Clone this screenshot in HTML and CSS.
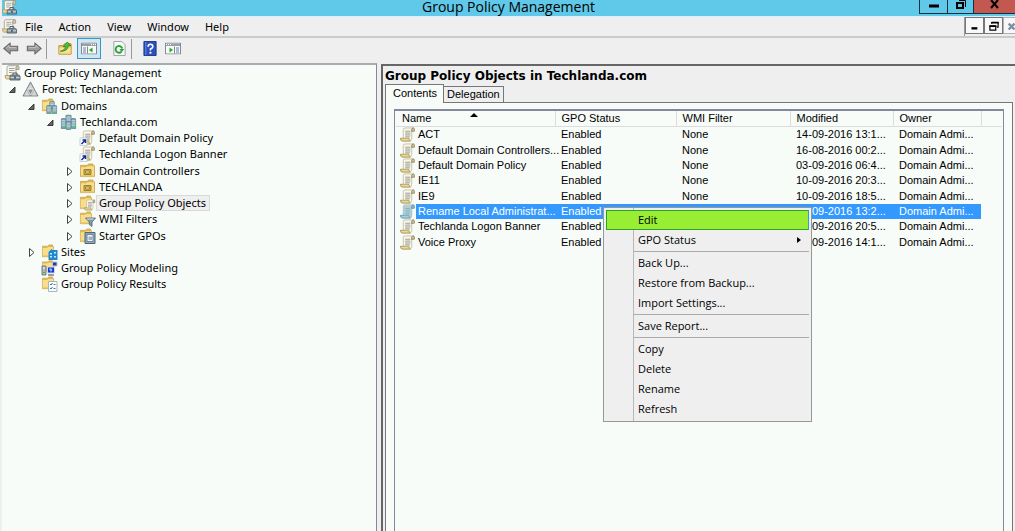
FILE: index.html
```html
<!DOCTYPE html>
<html lang="en">
<head>
<meta charset="utf-8">
<title>Group Policy Management</title>
<link rel="stylesheet" href="styles.css">
</head>
<body>
<svg class="sprite" aria-hidden="true">
  <symbol id="scroll" viewBox="0 0 16 16">
    <path d="M3.500 2.500Q3.500 1 5.500 1H14Q12.500 2 12.500 4V12Q12.500 15 10 15H3Q.5 15 .5 12.500H3.500Z" fill="#faf7e4" stroke="#bdb38c" stroke-width=".8"/>
    <path d="M12.500 5V2.500Q13 .8 14.500 .8Q15.800 2 15.300 4.500H12.500" fill="#d3c58f" stroke="#85795a" stroke-width=".8"/>
    <path d="M.5 12H9.500Q9.500 14.500 11 15H3Q.5 15 .5 12Z" fill="#ead893" stroke="#a39055" stroke-width=".8"/>
    <path d="M5.500 4.500H11M5.500 6.500H11M5.500 8.500H11M5.500 10.500H10.500" stroke="#858c99" stroke-width=".9"/>
  </symbol>
  <symbol id="console" viewBox="0 0 16 16">
    <path d="M2.500 2.500Q2.500 .7 4.500 .7H13Q11.500 2 11.500 4V12H2.500Z" fill="#fbf8ea" stroke="#9a968a" stroke-width=".8"/>
    <path d="M.5 10.500H7V14H2Q.5 14 .5 10.500Z" fill="#ead999" stroke="#9c8a55" stroke-width=".7"/>
    <path d="M11.500 4.500V2Q12.500 .5 14 .7Q15 2 14.500 4.500Z" fill="#d6cba0" stroke="#8d8a7c" stroke-width=".7"/>
    <path d="M4.500 3.500H10M4.500 5.500H10M4.500 7.500H8" stroke="#9297a0" stroke-width=".9"/>
    <path d="M8.500 10V8H12.500V10" fill="none" stroke="#4c5a63"/>
    <path d="M5.500 11L7 10H14L15.500 11V15H5.500Z" fill="#8496a0" stroke="#44525b" stroke-width=".8"/>
    <path d="M6 12.500H15" stroke="#c7d5d8"/><path d="M9.800 11.500H11.300V13.500H9.800Z" fill="#38464e"/>
  </symbol>
  <symbol id="forest" viewBox="0 0 16 16">
    <path d="M8 1L15.500 15H.5Z" fill="#a4a8aa" stroke="#6e7274" stroke-width=".8"/>
    <path d="M8 2.500L11 8H5ZM4.300 9L7 14.500H1.600ZM11.700 9L14.400 14.500H9Z" fill="#d4d7d8"/>
    <path d="M5 8.200H11L8 14Z" fill="#898e90" stroke="#f6f8f7" stroke-width=".7"/>
  </symbol>
  <symbol id="folder" viewBox="0 0 16 16" preserveAspectRatio="none">
    <path d="M1 2.500H8L9 1H13.500V3H15V14.500H1Z" fill="#e3b94e" stroke="#c29b3f" stroke-width=".7"/>
    <path d="M1.500 4.500H6.500L8 3.500H14.500V14H1.500Z" fill="#f7dd8e"/>
    <path d="M2 13.500H14" stroke="#e9c260"/>
  </symbol>
  <symbol id="server" viewBox="0 0 8 10" preserveAspectRatio="none">
    <path d="M1 1L2 .5H6L7 1V9.500H1Z" fill="#7fa3b3" stroke="#4a7084" stroke-width=".7"/>
    <path d="M1.500 2.500H6.500M1.500 4.500H6.500M1.500 6.500H6.500" stroke="#d9ebf1" stroke-width=".9"/>
    <path d="M4 7.500H6V9H4Z" fill="#3cdd32"/>
  </symbol>
  <symbol id="domains" viewBox="0 0 16 16">
    <use href="#folder" width="13" height="14"/>
    <use href="#server" x="7.500" y="3" width="6" height="8"/>
    <use href="#server" x="4.500" y="7" width="6" height="9"/>
    <use href="#server" x="10" y="7" width="6" height="9"/>
  </symbol>
  <symbol id="domain" viewBox="0 0 16 16">
    <use href="#server" x="4.500" y=".5" width="7" height="10"/>
    <use href="#server" x="0" y="4" width="6" height="11"/>
    <use href="#server" x="10" y="4" width="6" height="11"/>
    <use href="#server" x="5" y="7" width="6" height="9"/>
  </symbol>
  <symbol id="link" viewBox="0 0 16 16">
    <use href="#scroll" width="16" height="15"/>
    <path d="M.5 8H7.500V15.500H.5Z" fill="#fff" stroke="#b3bad3" stroke-width=".7"/>
    <path d="M2 14L5.500 10.500M3 10H6V13" fill="none" stroke="#172e91" stroke-width="1.500"/>
  </symbol>
  <symbol id="ou" viewBox="0 0 16 16">
    <use href="#folder" width="16" height="15"/>
    <path d="M4.500 6.500H11.500V11.500H4.500Z" fill="#d3b44b" stroke="#97802f"/>
    <path d="M6 8H10V10H6Z" fill="#f6e5a6" stroke="#866d1b" stroke-width=".7"/>
  </symbol>
  <symbol id="objects" viewBox="0 0 16 16">
    <use href="#folder" width="13" height="15"/>
    <use href="#scroll" x="4.500" y="4" width="11.500" height="12"/>
  </symbol>
  <symbol id="filters" viewBox="0 0 16 16">
    <use href="#folder" width="13" height="14"/>
    <path d="M6 7H16L12.500 11V15.500L9.800 13.500V11Z" fill="#7f9aaa" stroke="#486577" stroke-width=".8"/>
    <path d="M7.500 8H14" stroke="#d9edf2"/>
  </symbol>
  <symbol id="starter" viewBox="0 0 16 16">
    <use href="#folder" width="13" height="15"/>
    <path d="M5.500 4.500H15.500V15.500H5.500Z" fill="#93a9b7" stroke="#4e6676"/>
    <path d="M7.500 6.500H13.500V13.500H7.500Z" fill="#f5f7f8" stroke="#6a86a1"/>
    <path d="M9 8.500H12.500V12H9Z" fill="#9fb0c2"/>
  </symbol>
  <symbol id="sites" viewBox="0 0 16 16">
    <use href="#folder" width="13" height="14"/>
    <path d="M7 8L10 5L11 6H16V16H7Z" fill="#2088cf"/>
    <path d="M8.500 9H10.500V10.500H8.500ZM12.500 8H14.500V9.500H12.500ZM8.500 12H10.500V13.500H8.500ZM12.500 12H14.500V13.500H12.500Z" fill="#bdf0ff"/>
  </symbol>
  <symbol id="modeling" viewBox="0 0 16 16">
    <use href="#folder" width="13" height="12"/>
    <path d="M.5 6H4.500V15H.5Z" fill="#b3b8be" stroke="#5b646e" stroke-width=".8"/>
    <path d="M1.500 8H3.500" stroke="#fff"/><path d="M1.500 12.500H3.500" stroke="#39c431"/>
    <path d="M6 7H13V13H6Z" fill="#2234c9" stroke="#d5d9e2"/>
    <path d="M7.500 9L9.500 8L11 10L9.500 12Z" fill="#79c5ff"/>
    <path d="M6.500 15H12.500" stroke="#777f8b" stroke-width="1.500"/>
    <path d="M11 2H15.500V6H11Z" fill="#2c3a9e" stroke="#c2c6d2"/>
  </symbol>
  <symbol id="results" viewBox="0 0 16 16">
    <use href="#folder" width="13" height="14"/>
    <path d="M7 5.500H15.500V15.500H7Z" fill="#f8fcff" stroke="#93a6b5" stroke-width=".8"/>
    <path d="M8.500 8L9.500 9L11 7M8.500 12L9.500 13L11 11" fill="none" stroke="#1d77c9"/>
    <path d="M12 8.500H14M12 12.500H14" stroke="#60768a"/>
  </symbol>
  <symbol id="closed" viewBox="0 0 10 10"><path d="M2.500 1.500L7 5.500L2.500 9.500Z" fill="#fff" stroke="#444"/></symbol>
  <symbol id="open" viewBox="0 0 10 10"><path d="M7 3V8.500H1.500Z" fill="#666" stroke="#222" stroke-width=".8"/></symbol>
  <symbol id="arrow" viewBox="0 0 18 14"><path d="M1 7L8 1V4.500H16.500V9.500H8V13Z" fill="#9c9c9c" stroke="#666" stroke-width="1.200"/><path d="M3.500 6.500L7 3.500V6H15" fill="none" stroke="#c9c9c9"/></symbol>
  <symbol id="pane" viewBox="0 0 16 12">
    <path d="M.5.500H15.500V11.500H.5Z" fill="#f7f9fa" stroke="#83898e"/>
    <path d="M1 1H15V3.500H1Z" fill="#9aa1a6"/><path d="M10 2H11M12 2H13M14 2H15" stroke="#fff"/>
    <path d="M6.500 4V11" stroke="#83898e"/><path d="M2 5.500H5M2 7.500H5M2 9.500H5" stroke="#5f82b1"/>
    <path d="M11.500 5V10L8 7.500Z" fill="#22ab22"/>
  </symbol>
</svg>

<div class="window">
  <header class="titlebar">
    <svg class="app-icon"><use href="#console"/></svg>
    <h1>Group Policy Management</h1>
    <div class="caption-buttons">
      <button class="caption" aria-label="Minimize"><svg viewBox="0 0 12 14"><path d="M1 6H11" stroke="#000" stroke-width="3"/></svg></button>
      <button class="caption restore" aria-label="Restore"><svg viewBox="0 0 12 14"><path d="M2 3H8V8H2Z" fill="none" stroke="#000" stroke-width="2"/><path d="M4 .5H10.500V7" fill="none" stroke="#000"/></svg></button>
      <button class="caption close" aria-label="Close"><svg viewBox="0 0 12 14"><path d="M2 0L9 8M9 0L2 8" stroke="#000" stroke-width="2"/></svg></button>
    </div>
  </header>

  <div class="menubar">
    <svg class="app-icon"><use href="#console"/></svg>
    <nav>
      <button>File</button><button>Action</button><button>View</button><button>Window</button><button>Help</button>
    </nav>
    <div class="child-buttons">
      <button aria-label="Minimize child"><svg viewBox="0 0 12 12"><path d="M3 8H8" stroke="#000" stroke-width="2"/></svg></button>
      <button aria-label="Restore child"><svg viewBox="0 0 12 12"><path d="M2.500 6H7.500V9.500H2.500Z" fill="none" stroke="#000"/><path d="M4 4V3H9.500V7H8.500" fill="none" stroke="#000"/><path d="M2 6H8M4 3H10" stroke="#000" stroke-width="1.500"/></svg></button>
      <button class="child-close" aria-label="Close child"><svg viewBox="0 0 12 12"><path d="M4 4L9 9M9 4L4 9" stroke="#7b90a3" stroke-width="2"/></svg></button>
    </div>
  </div>

  <div class="toolbar">
    <button aria-label="Back"><svg viewBox="0 0 18 14"><use href="#arrow"/></svg></button>
    <button aria-label="Forward"><svg class="flip" viewBox="0 0 18 14"><use href="#arrow"/></svg></button>
    <span class="divider"></span>
    <button aria-label="Up one level"><svg viewBox="0 0 16 16"><path d="M1.500 5H6L7.500 3H14.500V14H1.500Z" fill="#efc85d" stroke="#b68a29"/><path d="M2 7H14V13.500H2Z" fill="#f8df92"/><path d="M3 11Q8 10 8.500 6H6L10.500 1L14 5H11.500Q11 11 3 11Z" fill="#4fc13c" stroke="#247e1c" stroke-width=".8"/></svg></button>
    <button class="pressed" aria-label="Show console tree"><svg viewBox="0 0 16 12"><use href="#pane"/></svg></button>
    <button class="refresh" aria-label="Refresh"><svg viewBox="0 0 16 16"><path d="M2.500.500H11L14.500 4V15.500H2.500Z" fill="#fafafa" stroke="#9a9fa3"/><path d="M10.500 11.500A3.600 3.600 0 1 1 11.500 8" fill="none" stroke="#27a333" stroke-width="2"/><path d="M8.500 8.500H13.500L11 12Z" fill="#27a333"/></svg></button>
    <span class="divider near"></span>
    <button aria-label="Help"><svg viewBox="0 0 14 16"><path d="M.5.500H13.500V15.500H.5Z" fill="#2c50bd" stroke="#183688"/><path d="M2.500 1V15" stroke="#6f8ee1"/><path d="M5 6Q5 3.500 7.500 3.500T10 6Q10 7.500 7.500 8.500V10" fill="none" stroke="#fff" stroke-width="1.700"/><path d="M6.500 11.500H8.500V13.500H6.500Z" fill="#fff"/></svg></button>
    <button aria-label="Show action pane"><svg class="flip" viewBox="0 0 16 12"><use href="#pane"/></svg></button>
  </div>

  <main class="workspace">
    <ul class="tree" role="tree">
      <li class="l0" role="treeitem"><svg class="icon"><use href="#console"/></svg><span>Group Policy Management</span></li>
      <li class="l1" role="treeitem"><svg class="twisty"><use href="#open"/></svg><svg class="icon"><use href="#forest"/></svg><span>Forest: Techlanda.com</span></li>
      <li class="l2" role="treeitem"><svg class="twisty"><use href="#open"/></svg><svg class="icon"><use href="#domains"/></svg><span>Domains</span></li>
      <li class="l3" role="treeitem"><svg class="twisty"><use href="#open"/></svg><svg class="icon"><use href="#domain"/></svg><span>Techlanda.com</span></li>
      <li class="l4" role="treeitem"><i class="twisty"></i><svg class="icon"><use href="#link"/></svg><span>Default Domain Policy</span></li>
      <li class="l4" role="treeitem"><i class="twisty"></i><svg class="icon"><use href="#link"/></svg><span>Techlanda Logon Banner</span></li>
      <li class="l4" role="treeitem"><svg class="twisty"><use href="#closed"/></svg><svg class="icon"><use href="#ou"/></svg><span>Domain Controllers</span></li>
      <li class="l4" role="treeitem"><svg class="twisty"><use href="#closed"/></svg><svg class="icon"><use href="#ou"/></svg><span>TECHLANDA</span></li>
      <li class="l4 current" role="treeitem" aria-selected="true"><svg class="twisty"><use href="#closed"/></svg><svg class="icon"><use href="#objects"/></svg><span>Group Policy Objects</span></li>
      <li class="l4" role="treeitem"><svg class="twisty"><use href="#closed"/></svg><svg class="icon"><use href="#filters"/></svg><span>WMI Filters</span></li>
      <li class="l4" role="treeitem"><svg class="twisty"><use href="#closed"/></svg><svg class="icon"><use href="#starter"/></svg><span>Starter GPOs</span></li>
      <li class="l2" role="treeitem"><svg class="twisty"><use href="#closed"/></svg><svg class="icon"><use href="#sites"/></svg><span>Sites</span></li>
      <li class="l2" role="treeitem"><i class="twisty"></i><svg class="icon"><use href="#modeling"/></svg><span>Group Policy Modeling</span></li>
      <li class="l2" role="treeitem"><i class="twisty"></i><svg class="icon"><use href="#results"/></svg><span>Group Policy Results</span></li>
    </ul>

    <section class="details">
      <h2>Group Policy Objects in Techlanda.com</h2>
      <div class="tabs" role="tablist">
        <button class="active" role="tab" aria-selected="true">Contents</button>
        <button role="tab">Delegation</button>
      </div>
      <div class="tab-page">
        <div class="list">
          <table>
            <colgroup><col class="c-name"><col class="c-status"><col class="c-wmi"><col class="c-modified"><col class="c-owner"><col></colgroup>
            <thead><tr><th class="sorted">Name<svg viewBox="0 0 8 4"><path d="M0 4L4 0L8 4Z"/></svg></th><th>GPO Status</th><th>WMI Filter</th><th>Modified</th><th>Owner</th><th></th></tr></thead>
            <tbody>
              <tr><td><svg><use href="#scroll"/></svg>ACT</td><td>Enabled</td><td>None</td><td>14-09-2016 13:1...</td><td>Domain Admi...</td><td></td></tr>
              <tr><td><svg><use href="#scroll"/></svg>Default Domain Controllers...</td><td>Enabled</td><td>None</td><td>16-08-2016 00:2...</td><td>Domain Admi...</td><td></td></tr>
              <tr><td><svg><use href="#scroll"/></svg>Default Domain Policy</td><td>Enabled</td><td>None</td><td>03-09-2016 06:4...</td><td>Domain Admi...</td><td></td></tr>
              <tr><td><svg><use href="#scroll"/></svg>IE11</td><td>Enabled</td><td>None</td><td>10-09-2016 20:3...</td><td>Domain Admi...</td><td></td></tr>
              <tr><td><svg><use href="#scroll"/></svg>IE9</td><td>Enabled</td><td>None</td><td>10-09-2016 18:5...</td><td>Domain Admi...</td><td></td></tr>
              <tr class="selected"><td><svg><use href="#scroll"/></svg>Rename Local Administrat...</td><td>Enabled</td><td>None</td><td>14-09-2016 13:2...</td><td>Domain Admi...</td><td></td></tr>
              <tr><td><svg><use href="#scroll"/></svg>Techlanda Logon Banner</td><td>Enabled</td><td>None</td><td>10-09-2016 20:5...</td><td>Domain Admi...</td><td></td></tr>
              <tr><td><svg><use href="#scroll"/></svg>Voice Proxy</td><td>Enabled</td><td>None</td><td>10-09-2016 14:1...</td><td>Domain Admi...</td><td></td></tr>
            </tbody>
          </table>
          <div class="context-menu" role="menu">
            <button class="hot" role="menuitem">Edit</button>
            <button role="menuitem">GPO Status<svg viewBox="0 0 4 6"><path d="M0 0L4 3L0 6Z"/></svg></button>
            <hr>
            <button role="menuitem">Back Up...</button>
            <button role="menuitem">Restore from Backup...</button>
            <button role="menuitem">Import Settings...</button>
            <hr>
            <button role="menuitem">Save Report...</button>
            <hr>
            <button role="menuitem">Copy</button>
            <button role="menuitem">Delete</button>
            <button role="menuitem">Rename</button>
            <button role="menuitem">Refresh</button>
          </div>
        </div>
      </div>
    </section>
  </main>
</div>
</body>
</html>
```

FILE: styles.css
```css
* { box-sizing: border-box; }
body {
  margin: 0;
  background: #efefef;
  color: #000;
  font: 11px/16px "Noto Sans", "Open Sans", sans-serif;
}
button {
  margin: 0;
  padding: 0;
  border: 0;
  background: none;
  color: inherit;
  font: inherit;
}
svg { display: block; flex: none; }
.sprite { position: absolute; width: 0; height: 0; }
.window {
  display: flex;
  flex-direction: column;
  height: 100vh;
  padding-left: 2px;
  overflow: hidden;
}
.app-icon { width: 15px; height: 15px; }

/* Title bar */
.titlebar {
  display: grid;
  grid-template-columns: 1fr auto 1fr;
  align-items: start;
  height: 17px;
  background: #60c8e8;
  border-bottom: 1px solid #d8f2fa;
}
.titlebar h1 {
  margin: 0;
  font: 400 14px/14px "Open Sans", sans-serif;
}
.caption-buttons { display: flex; justify-content: flex-end; }
.caption {
  display: flex;
  justify-content: center;
  width: 28px;
  height: 14px;
  border: solid #16303a;
  border-width: 0 0 1px 1px;
}
.caption svg { width: 12px; height: 14px; }
.caption.restore { width: 26px; }
.caption.close { width: 42px; background: #c25850; }

/* Menu bar */
.menubar {
  display: flex;
  align-items: center;
  height: 21px;
  border-bottom: 2px solid #c9cccb;
}
.menubar nav { display: flex; flex: 1; }
.menubar nav button { padding: 0 8px; }
.child-buttons { display: flex; width: 51px; height: 19px; border-left: 1px solid #999; }
.child-buttons button {
  flex: none;
  width: 19px;
  height: 17px;
  border: 1px solid #777;
  background: #f8f8f8;
}
.child-buttons svg { width: 14px; height: 14px; margin: auto; }
.child-buttons .child-close { width: 13px; border-right: 0; border-color: #aab3b8; }

/* Toolbar */
.toolbar {
  display: flex;
  align-items: center;
  gap: 7px;
  height: 25px;
  padding: 0 0 4px 1px;
}
.toolbar svg { width: 16px; height: 15px; margin: auto; }
.toolbar .divider { width: 1px; height: 20px; margin: 0 3px 0 -3px; background: #999; }
.toolbar .flip { transform: scaleX(-1); }
.toolbar .pressed { width: 24px; height: 21px; margin-left: -3px; border: 1px solid #3399cc; background: #cfe7f3; }
.toolbar .refresh { margin-left: 3px; }

/* Tree */
.workspace {
  display: grid;
  grid-template-columns: 375px 1fr;
  gap: 4px;
  flex: 1;
  min-height: 0;
}
.tree {
  margin: 0;
  padding: 0;
  border-top: 2px solid #a8abb2;
  border-right: 1px solid #83889a;
  background: #f7fcf9;
  list-style: none;
}
.tree li { display: flex; align-items: center; height: 16px; white-space: nowrap; }
.tree li:nth-child(4n + 3) { height: 17px; }
.tree span { padding: 0 3px; line-height: 14px; }
.icon { width: 17px; height: 16px; }
.twisty { flex: none; width: 10px; height: 10px; margin-right: 4px; }
.l0 { padding-left: 2px; }
.l1 { padding-left: 6px; }
.l2 { padding-left: 25px; }
.l3 { padding-left: 44px; }
.l4 { padding-left: 63px; }
.tree .current span { border: 1px solid #d9d9d9; background: #efefef; padding-left: 2px; }

/* Details pane */
.details {
  display: flex;
  flex-direction: column;
  margin-top: 1px;
  padding: 2px 2px 0;
  border: solid #666;
  border-width: 2px 0 0 2px;
  min-width: 0;
}
.details h2 { margin: 0; font: 700 12px/16px "DejaVu Sans", sans-serif; }
.tabs { display: flex; align-items: flex-end; }
.tabs button {
  height: 16px;
  padding: 0 3px;
  border: solid #777;
  border-width: 1px 1px 0 0;
  font: 11px/15px "Liberation Sans", sans-serif;
}
.tabs .active {
  z-index: 1;
  height: 19px;
  margin-bottom: -1px;
  padding: 0 6px 2px 7px;
  border-left-width: 1px;
  background: #f7fcf9;
}
.tab-page {
  flex: 1;
  padding: 6px 8px 0;
  border: 1px solid #777;
  border-bottom: 0;
  background: #f7fcf9;
}
.list {
  position: relative;
  height: 100%;
  padding: 0 1px;
  border: solid #83889a;
  border-width: 2px 1px 0;
  font: 11px/15px "Liberation Sans", sans-serif;
}
.list table { width: 100%; border-collapse: collapse; table-layout: fixed; }
.c-name { width: 159px; }
.c-status { width: 121px; }
.c-wmi { width: 114px; }
.c-modified { width: 103px; }
.c-owner { width: 88px; }
.list th, .list td { padding: 0 0 0 6px; text-align: left; white-space: nowrap; }
.list th { position: relative; height: 15px; border-right: 1px solid #dcdcdc; border-bottom: 1px solid #dcdcdc; font-weight: 400; }
.list th:last-child { border-right: 0; }
.sorted svg { position: absolute; top: 2px; left: 47%; width: 8px; height: 4px; }
.list tbody tr { height: 15px; }
.list tbody tr:nth-child(3n + 2) { height: 16px; }
.list td svg { float: left; width: 15px; height: 15px; margin-right: 3px; }
.list td:first-child { padding-left: 4px; }
.selected td { background: #3399ff; color: #fff; }
.selected td:first-child { background: linear-gradient(to right, transparent 20px, #3399ff 20px); }
.selected td:last-child { background: none; }
.selected svg { filter: sepia(1) hue-rotate(170deg) saturate(2) brightness(.8); }

/* Context menu */
.context-menu {
  position: absolute;
  top: 96px;
  left: 208px;
  width: 209px;
  padding: 2px;
  border: 1px solid #979797;
  background: linear-gradient(to right, #efefef 29px, #b8b8b8 29px, #b8b8b8 30px, #efefef 30px);
  font: 11px/18px "Open Sans", sans-serif;
}
.context-menu button {
  display: flex;
  align-items: center;
  justify-content: space-between;
  width: 100%;
  height: 20px;
  padding: 0 8px 0 32px;
}
.context-menu .hot { padding-left: 31px; border: 1px solid #2ca02c; border-right-color: #26a0da; background: #99ee33; }
.context-menu svg { width: 4px; height: 6px; }
.context-menu hr { height: 1px; margin: 1px 0 1px 28px; border: 0; background: #aaa; }
```
